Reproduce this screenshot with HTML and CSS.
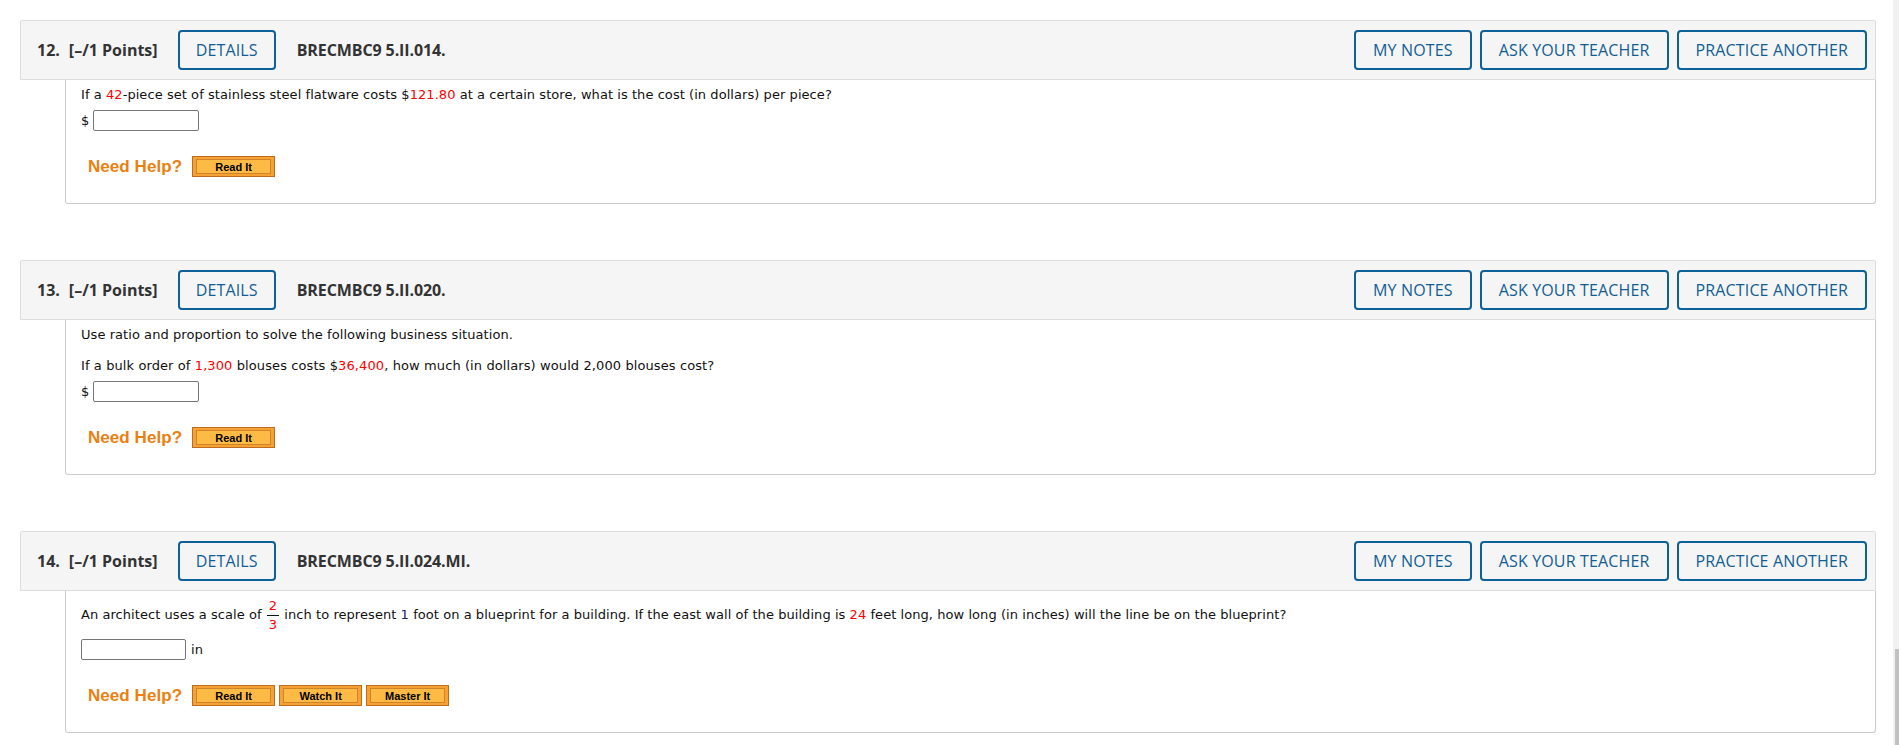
FILE: index.html
```html
<!DOCTYPE html>
<html lang="en">
<head>
<meta charset="utf-8">
<title>Questions</title>
<link rel="stylesheet" href="styles.css">
</head>
<body>
<div class="page">

  <section class="question">
    <div class="q-header">
      <div class="q-left">
        <span class="q-num">12.</span>
        <span class="q-points">[–/1 Points]</span>
        <button class="btn-outline btn-details">DETAILS</button>
        <span class="q-code">BRECMBC9 5.II.014.</span>
      </div>
      <div class="q-right">
        <button class="btn-outline">MY NOTES</button>
        <button class="btn-outline">ASK YOUR TEACHER</button>
        <button class="btn-outline">PRACTICE ANOTHER</button>
      </div>
    </div>
    <div class="q-body">
      <p class="q-text">If a <span class="red">42</span>-piece set of stainless steel flatware costs $<span class="red">121.80</span> at a certain store, what is the cost (in dollars) per piece?</p>
      <div class="answer"><span class="unit-pre">$</span><input class="ans-input" type="text"></div>
      <div class="help">
        <span class="help-label">Need Help?</span>
        <button class="help-btn"><span class="help-inner">Read It</span></button>
      </div>
    </div>
  </section>

  <section class="question">
    <div class="q-header">
      <div class="q-left">
        <span class="q-num">13.</span>
        <span class="q-points">[–/1 Points]</span>
        <button class="btn-outline btn-details">DETAILS</button>
        <span class="q-code">BRECMBC9 5.II.020.</span>
      </div>
      <div class="q-right">
        <button class="btn-outline">MY NOTES</button>
        <button class="btn-outline">ASK YOUR TEACHER</button>
        <button class="btn-outline">PRACTICE ANOTHER</button>
      </div>
    </div>
    <div class="q-body">
      <p class="q-text">Use ratio and proportion to solve the following business situation.</p>
      <p class="q-text q-text-next">If a bulk order of <span class="red">1,300</span> blouses costs $<span class="red">36,400</span>, how much (in dollars) would 2,000 blouses cost?</p>
      <div class="answer"><span class="unit-pre">$</span><input class="ans-input" type="text"></div>
      <div class="help">
        <span class="help-label">Need Help?</span>
        <button class="help-btn"><span class="help-inner">Read It</span></button>
      </div>
    </div>
  </section>

  <section class="question">
    <div class="q-header">
      <div class="q-left">
        <span class="q-num">14.</span>
        <span class="q-points">[–/1 Points]</span>
        <button class="btn-outline btn-details">DETAILS</button>
        <span class="q-code">BRECMBC9 5.II.024.MI.</span>
      </div>
      <div class="q-right">
        <button class="btn-outline">MY NOTES</button>
        <button class="btn-outline">ASK YOUR TEACHER</button>
        <button class="btn-outline">PRACTICE ANOTHER</button>
      </div>
    </div>
    <div class="q-body">
      <p class="q-text">An architect uses a scale of <span class="frac"><span class="frac-num">2</span><span class="frac-den">3</span></span> inch to represent <span class="navy">1</span> foot on a blueprint for a building. If the east wall of the building is <span class="red">24</span> feet long, how long (in inches) will the line be on the blueprint?</p>
      <div class="answer answer-frac"><input class="ans-input ans-input-wide" type="text"><span class="unit-post">in</span></div>
      <div class="help">
        <span class="help-label">Need Help?</span>
        <button class="help-btn"><span class="help-inner">Read It</span></button>
        <button class="help-btn"><span class="help-inner">Watch It</span></button>
        <button class="help-btn"><span class="help-inner">Master It</span></button>
      </div>
    </div>
  </section>

</div>
<div class="scrollbar"><div class="scrollbar-thumb"></div></div>
</body>
</html>
```

FILE: styles.css
```css
html, body {
  margin: 0;
  padding: 0;
  background: #ffffff;
  overflow: hidden;
}

.page {
  padding: 20px 23px 10px 20px;
}

.question + .question {
  margin-top: 56px;
}

.q-header {
  box-sizing: border-box;
  height: 60px;
  display: flex;
  align-items: center;
  justify-content: space-between;
  padding: 0 8px 0 16px;
  background: #f5f5f5;
  border: 1px solid #dddddd;
  border-radius: 2px 2px 0 0;
  font-family: "Open Sans", "Liberation Sans", sans-serif;
  font-size: 16px;
  color: #333333;
}

.q-left, .q-right {
  display: flex;
  align-items: center;
}

.q-right {
  gap: 8px;
}

.q-num {
  font-weight: 700;
  margin-right: 9px;
}

.q-points {
  font-weight: 700;
  margin-right: 20px;
}

.q-code {
  font-weight: 700;
  margin-left: 21px;
  letter-spacing: -0.1px;
}

.btn-outline {
  box-sizing: border-box;
  height: 40px;
  padding: 0 17px;
  background: transparent;
  border: 2px solid #0d6199;
  border-radius: 4px;
  font-family: "Open Sans", "Liberation Sans", sans-serif;
  font-size: 16px;
  letter-spacing: 0.15px;
  color: #125e93;
  line-height: 1;
  cursor: pointer;
}

.btn-details {
  padding: 0 16px;
}

.q-body {
  margin-left: 45px;
  padding: 7px 15px 26px 15px;
  border: 1px solid #cccccc;
  border-top: none;
  border-radius: 0 0 3px 3px;
  font-family: Verdana, "DejaVu Sans", sans-serif;
  font-size: 13px;
  letter-spacing: 0.06px;
  color: #111111;
}

.q-text {
  margin: 0;
  line-height: 16px;
}

.q-text-next {
  margin-top: 15px;
  letter-spacing: 0.1px;
}

.red {
  color: #ff0000;
}

.navy {
  color: #14206a;
}

.frac {
  display: inline-flex;
  flex-direction: column;
  align-items: stretch;
  vertical-align: middle;
  margin: 0 1px;
  text-align: center;
  line-height: 14px;
  color: #ff0000;
}

.frac-num {
  border-bottom: 1px solid #111111;
  padding: 1px 2px 2px;
}

.frac-den {
  padding: 2px 2px 1px;
}

.answer {
  display: flex;
  align-items: center;
  margin-top: 7px;
  height: 21px;
}

.answer-frac {
  margin-top: 6px;
}

.unit-pre {
  margin-right: 4px;
}

.unit-post {
  margin-left: 5px;
}

.ans-input {
  box-sizing: border-box;
  width: 106px;
  height: 21px;
  margin: 0;
  padding: 0 3px;
  border: 1px solid #767676;
  border-radius: 2px;
  background: #ffffff;
}

.ans-input-wide {
  width: 105px;
}

.help {
  display: flex;
  align-items: center;
  margin-top: 25px;
  padding-left: 7px;
  height: 21px;
}

.help-label {
  font-family: "Liberation Sans", Arial, sans-serif;
  font-weight: 700;
  font-size: 17px;
  color: #ec7f10;
  margin-right: 10px;
}

.help-btn {
  box-sizing: border-box;
  width: 83px;
  height: 21px;
  margin: 0 4px 0 0;
  padding: 2px 3px;
  border: 1px solid #bb6c1d;
  background: #f7a033;
  display: flex;
  cursor: pointer;
}

.help-inner {
  flex: 1;
  display: flex;
  align-items: center;
  justify-content: center;
  border: 1px solid #d0842a;
  background: #fdbb45;
  font-family: "Liberation Sans", Arial, sans-serif;
  font-weight: 700;
  font-size: 11px;
  color: #000000;
}

.scrollbar {
  position: fixed;
  top: 0;
  right: 0;
  width: 6px;
  height: 100%;
  background: #f1f1f1;
}

.scrollbar-thumb {
  position: absolute;
  right: 0;
  top: 649px;
  width: 4px;
  height: 96px;
  background: #c1c1c1;
}
```
